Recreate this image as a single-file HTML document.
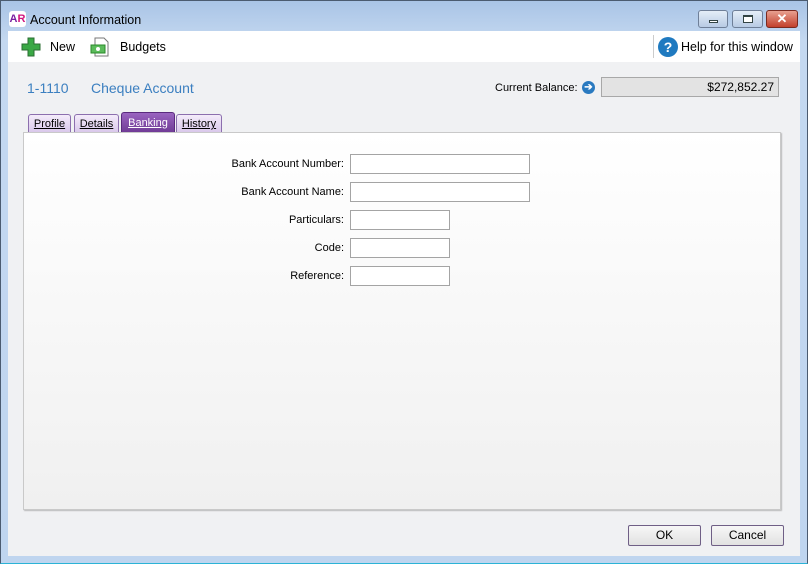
<!DOCTYPE html>
<html><head><style>
*{margin:0;padding:0;box-sizing:border-box}
body{width:808px;height:564px;overflow:hidden;font-family:"Liberation Sans",sans-serif;font-size:12px;color:#000;background:#bcd3ee;position:relative}
.frame{position:absolute;left:0;top:0;width:808px;height:564px;border:1px solid #4b5b70;border-bottom-color:#2bb3d6;background:linear-gradient(#a9c4e6,#c4d8f0 40px,#bfd5ef)}
.a{position:absolute}
.client{left:8px;top:31px;width:792px;height:525px;background:#f0f1f3}
.tb{left:8px;top:31px;width:792px;height:31px;background:#fff}
.btn{border:1px solid #6f5f86;border-radius:2px;background:linear-gradient(#f7f7f7,#e1e1e1);text-align:center;line-height:19px;height:21px}
.wb{top:10px;height:18px;border:1px solid #6f7f98;border-radius:3px;background:linear-gradient(#e4edf8,#b8cbe4)}
.tab{top:114px;height:19px;border:1px solid #8c6fae;border-bottom:none;border-radius:3px 3px 0 0;background:linear-gradient(#f4ecfa,#d8c6ea);text-align:center;line-height:19px;font-size:11px;text-decoration:underline}
.panel{left:23px;top:132px;width:758px;height:378px;border:1px solid #c9c9c9;background:linear-gradient(#fff,#f0f0f0);box-shadow:1px 1px 1px #bbb}
.lbl{text-align:right;width:200px;font-size:11px;left:144px}
.in{left:350px;height:20px;border:1px solid #a4a4a4;background:#fff}
</style></head><body>
<div class="frame"></div>
<div class="a client"></div>
<div class="a tb"></div>
<div class="a" style="left:9px;top:11px;width:17px;height:16px;background:#fff;border-radius:3px;font-weight:bold;font-size:11px;line-height:16px;color:#7a1fa0;text-align:center">A<span style="color:#d1157e">R</span></div>
<div class="a" style="left:30px;top:13px;font-size:12.5px">Account Information</div>
<div class="a wb" style="left:698px;width:30px"><div class="a" style="left:10px;top:9px;width:9px;height:3px;border:1px solid #344;background:#fff"></div></div>
<div class="a wb" style="left:732px;width:31px"><div class="a" style="left:10px;top:4px;width:10px;height:8px;border:1px solid #344;border-top-width:2px;background:#fff"></div></div>
<div class="a wb" style="left:766px;width:32px;border-color:#7a2a20;background:linear-gradient(#e8a090,#c2402c);color:#fff;font-weight:bold;text-align:center;line-height:15px;font-size:13px">✕</div>
<svg class="a" style="left:20px;top:36px" width="22" height="22"><path d="M8 2h6v6h6v6h-6v6H8v-6H2V8h6z" fill="#3aa845" stroke="#2b6e32"/></svg>
<div class="a" style="left:50px;top:40px;font-size:12.5px">New</div>
<svg class="a" style="left:90px;top:36px" width="22" height="22"><path d="M5 2h9l4 4v14H5z" fill="#fff" stroke="#777"/><rect x="1" y="9" width="14" height="8" fill="#5bbb5b" stroke="#2a8a2a"/><circle cx="8" cy="13" r="2" fill="#fff"/></svg>
<div class="a" style="left:120px;top:40px;font-size:12.5px">Budgets</div>
<div class="a" style="left:653px;top:35px;width:1px;height:23px;background:#ccc"></div>
<div class="a" style="left:658px;top:37px;width:20px;height:20px;border-radius:50%;background:#1f7ac0;color:#fff;font-weight:bold;text-align:center;line-height:20px;font-size:14px">?</div>
<div class="a" style="left:681px;top:40px;font-size:12.5px">Help for this window</div>
<div class="a" style="left:27px;top:80px;font-size:14px;color:#3b7fc0">1-1110</div>
<div class="a" style="left:91px;top:80px;font-size:14px;color:#3b7fc0">Cheque Account</div>
<div class="a" style="left:495px;top:82px;font-size:11px">Current Balance:</div>
<div class="a" style="left:582px;top:81px;width:13px;height:13px;border-radius:50%;background:#2a7ac0;color:#fff;font-size:10px;line-height:13px;text-align:center;font-weight:bold">➔</div>
<div class="a" style="left:601px;top:77px;width:178px;height:20px;border:1px solid #a8a8a8;background:#e3e3e3;text-align:right;padding-right:4px;line-height:18px;font-size:12px">$272,852.27</div>
<div class="a tab" style="left:28px;width:43px">Profile</div>
<div class="a tab" style="left:74px;width:45px">Details</div>
<div class="a tab" style="left:121px;width:54px;top:112px;height:21px;line-height:21px;background:linear-gradient(#9a64c0,#6e3a94);color:#fff;border-color:#5a2a7e">Banking</div>
<div class="a tab" style="left:176px;width:46px">History</div>
<div class="a panel"></div>
<div class="a lbl" style="top:158px">Bank Account Number:</div>
<div class="a lbl" style="top:186px">Bank Account Name:</div>
<div class="a lbl" style="top:214px">Particulars:</div>
<div class="a lbl" style="top:242px">Code:</div>
<div class="a lbl" style="top:270px">Reference:</div>
<div class="a in" style="top:154px;width:180px"></div>
<div class="a in" style="top:182px;width:180px"></div>
<div class="a in" style="top:210px;width:100px"></div>
<div class="a in" style="top:238px;width:100px"></div>
<div class="a in" style="top:266px;width:100px"></div>
<div class="a btn" style="left:628px;top:525px;width:73px">OK</div>
<div class="a btn" style="left:711px;top:525px;width:73px">Cancel</div>
</body></html>
